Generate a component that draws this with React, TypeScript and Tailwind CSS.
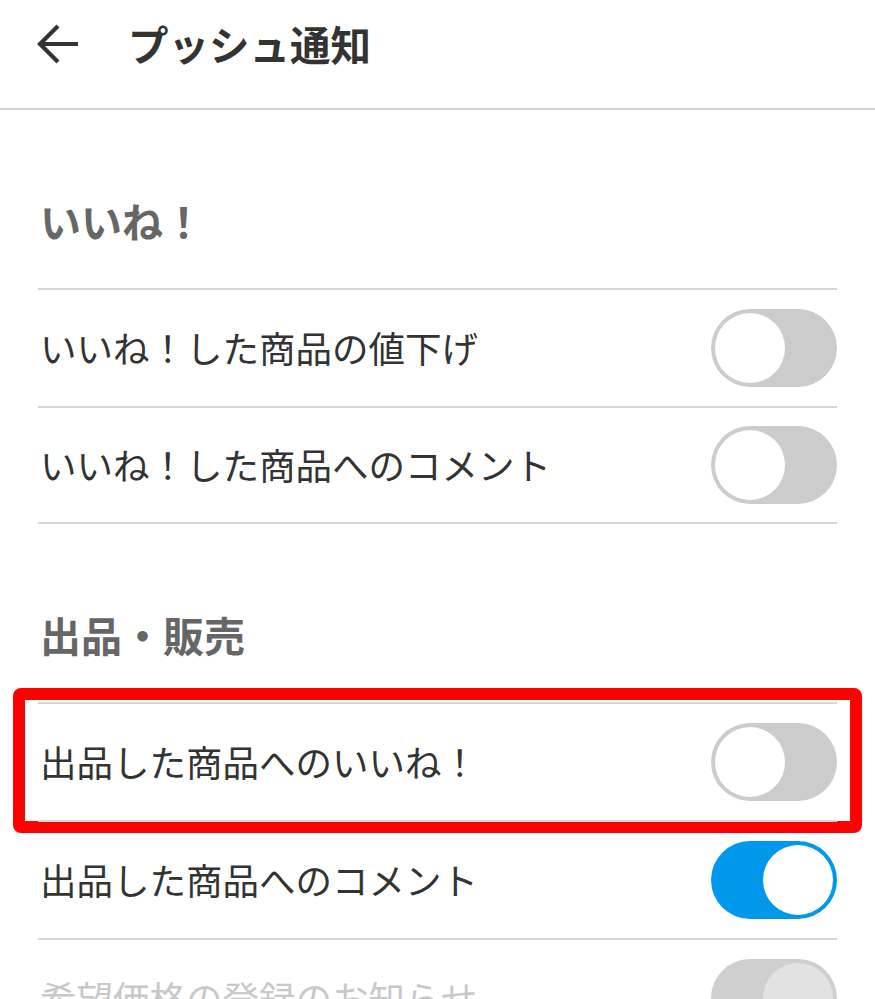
const font = { fontFamily: '"Noto Sans CJK JP", "Noto Sans", sans-serif' };

type ToggleState = "off" | "on" | "disabled";

function Toggle({ state }: { state: ToggleState }) {
  const track =
    state === "on" ? "bg-[#0098eb] justify-end" : state === "disabled" ? "bg-[#cfcfcf] justify-end" : "bg-[#cccccc] justify-start";
  const knob = state === "disabled" ? "bg-[#e2e2e2]" : "bg-white";
  return (
    <div className={`flex items-center w-[126px] h-[78px] rounded-full p-[4px] ${track}`}>
      <div className={`w-[70px] h-[70px] rounded-full ${knob}`} />
    </div>
  );
}

interface RowProps {
  label: string;
  state: ToggleState;
  highlighted?: boolean;
  last?: boolean;
}

function Row({ label, state, highlighted, last }: RowProps) {
  return (
    <div
      className={`relative flex items-center justify-between h-[118px] border-t-2 border-[#d6d6d6] ${
        last ? "border-b-2" : ""
      }`}
    >
      <span
        className={`pl-[2px] text-[36.5px] leading-[48px] ${state === "disabled" ? "text-[#c8c8c8]" : "text-[#333333]"}`}
      >
        {label}
      </span>
      <Toggle state={state} />
      {highlighted && (
        <div className="absolute -top-[16px] -left-[25px] w-[849px] h-[145px] border-[12px] border-[#ff0000] rounded-[8px] pointer-events-none" />
      )}
    </div>
  );
}

function SectionHeading({ title, height }: { title: string; height: string }) {
  return (
    <div className={`flex items-end pb-[44px] ${height}`}>
      <h2 className="pl-[2px] text-[41px] leading-[48px] font-bold text-[#666666]">{title}</h2>
    </div>
  );
}

export default function App() {
  return (
    <div className="w-[875px] h-[999px] overflow-hidden bg-white" style={font}>
      <header className="flex items-center h-[110px] border-b-2 border-[#d4d4d4] pb-[20px]">
        <svg
          className="ml-[36px]"
          width="44"
          height="44"
          viewBox="0 0 44 44"
          fill="none"
          stroke="#333333"
          strokeWidth="4.2"
          strokeLinecap="butt"
        >
          <path d="M22 4 L4 22 L22 40" />
          <path d="M4 22 H42" />
        </svg>
        <h1 className="ml-[48px] text-[40.5px] leading-[48px] font-bold text-[#333333]">プッシュ通知</h1>
      </header>

      <div className="px-[38px]">
        <SectionHeading title="いいね！" height="h-[178px]" />
        <Row label="いいね！した商品の値下げ" state="off" />
        <Row label="いいね！した商品へのコメント" state="off" last />

        <div className="-mt-[2px]">
          <SectionHeading title="出品・販売" height="h-[180px]" />
        </div>
        <Row label="出品した商品へのいいね！" state="off" highlighted />
        <Row label="出品した商品へのコメント" state="on" />
        <Row label="希望価格の登録のお知らせ" state="disabled" />
      </div>
    </div>
  );
}
